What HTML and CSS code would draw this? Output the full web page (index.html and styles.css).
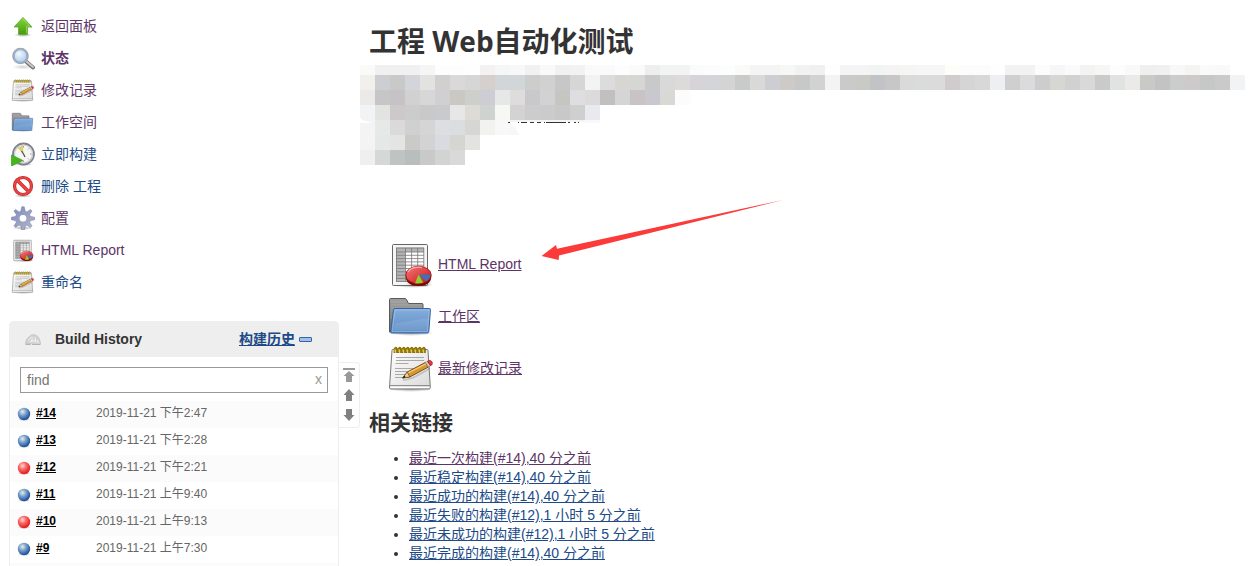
FILE: index.html
```html
<!DOCTYPE html>
<html lang="zh-CN">
<head>
    <meta charset="utf-8">
    <title>Web自动化测试 [Jenkins]</title>
    <link rel="stylesheet" href="styles.css">
</head>
<body>
    <!-- icons used more than once -->
    <svg class="defs" width="0" height="0" aria-hidden="true">
        <defs>
            <linearGradient id="paper" x1="0" y1="0" x2="1" y2="1">
                <stop offset="0" stop-color="#ffffff"/>
                <stop offset="1" stop-color="#d9d9d9"/>
            </linearGradient>
            <linearGradient id="folderBack" x1="0" y1="0" x2="0" y2="1">
                <stop offset="0" stop-color="#a0a0a0"/>
                <stop offset="1" stop-color="#6c6c6c"/>
            </linearGradient>
            <linearGradient id="folderFront" x1="0" y1="0" x2="0" y2="1">
                <stop offset="0" stop-color="#87aedb"/>
                <stop offset="1" stop-color="#5b8cc6"/>
            </linearGradient>
            <linearGradient id="green" x1="0" y1="0" x2="0" y2="1">
                <stop offset="0" stop-color="#86d63a"/>
                <stop offset="1" stop-color="#459a0c"/>
            </linearGradient>
            <linearGradient id="redPie" x1="0" y1="0" x2="1" y2="1">
                <stop offset="0" stop-color="#f47a7a"/>
                <stop offset="1" stop-color="#cc1010"/>
            </linearGradient>
            <linearGradient id="steel" x1="0" y1="0" x2="1" y2="1">
                <stop offset="0" stop-color="#8088bc"/>
                <stop offset="1" stop-color="#b3bacb"/>
            </linearGradient>
            <radialGradient id="glass" cx="0.4" cy="0.35" r="0.7">
                <stop offset="0" stop-color="#f3f9ff"/>
                <stop offset="1" stop-color="#a3c5ea"/>
            </radialGradient>
            <radialGradient id="blueBall" cx="0.38" cy="0.32" r="0.65">
                <stop offset="0" stop-color="#e6efe6"/>
                <stop offset="0.45" stop-color="#7ba2cd"/>
                <stop offset="1" stop-color="#1f529d"/>
            </radialGradient>
            <radialGradient id="redBall" cx="0.38" cy="0.32" r="0.65">
                <stop offset="0" stop-color="#ffd9d9"/>
                <stop offset="0.45" stop-color="#fa6a6a"/>
                <stop offset="1" stop-color="#e81c1c"/>
            </radialGradient>
            <radialGradient id="shade">
                <stop offset="0" stop-color="#000" stop-opacity="0.35"/>
                <stop offset="1" stop-color="#000" stop-opacity="0"/>
            </radialGradient>
        </defs>

        <symbol id="icon-report" viewBox="0 0 48 48">
            <ellipse cx="26" cy="45" rx="20" ry="3" fill="url(#shade)"/>
            <rect x="5.5" y="4.5" width="35" height="41" rx="1" fill="#f6f6f6" stroke="#666"/>
            <rect x="9" y="7.500" width="28" height="34" fill="#fff"/>
            <path d="M9 7.500h28v4.500H18.500v29.500H9z" fill="#b5b5b5"/>
            <path d="M9 8h28M9 12h28M9 15.300h28M9 18.600h28M9 21.900h28M9 25.200h28M9 28.500h28M9 31.800h28M9 35.100h28M9 38.400h28M9 41.500h28M9.500 8v33.500M18.500 8v33.500M24.600 8v33.500M30.700 8v33.500M36.800 8v33.500" fill="none" stroke="#777" stroke-width="0.8"/>
            <ellipse cx="32" cy="43" rx="14" ry="4.500" fill="url(#shade)"/>
            <path d="M18.800 35v2.500c0 5 5.700 8.500 12.700 8.500s12.700-3.500 12.700-8.500V35z" fill="#7d0505"/>
            <ellipse cx="31.500" cy="35" rx="12.700" ry="8.800" fill="url(#redPie)" stroke="#a80a0a" stroke-width="0.8"/>
            <path d="M31.500 34.500h12c0 3-1.500 5-4.700 6.800z" fill="#3f71b5"/>
            <path d="M31.500 34.500l4.700 8c-3 1.200-5.800 1.200-8.200.8z" fill="#8ed12c"/>
            <path d="M21 32c2-4 8-5.500 14-4.500" fill="none" stroke="#ffb0b0" stroke-width="1.200"/>
        </symbol>

        <symbol id="icon-folder" viewBox="0 0 48 48">
            <ellipse cx="24" cy="41" rx="23" ry="3" fill="url(#shade)"/>
            <path d="M2.500 40V7.500q0-1 1-1H18q1 0 1.500 1l2 4H35q1 0 1 1V40z" fill="url(#folderBack)" stroke="#5a5a5a"/>
            <path d="M4 10h15M4 13h31M4 16h31M4 19h10M4 22h10M4 25h10" stroke="#b7b7b7" stroke-width="0.6"/>
            <path d="M8 16.500h34.500q1 0 1 1l-1.700 22q-.2 1.500-1.500 1.500H4.500q-1 0-.8-1.500l2.800-22q.2-1 1.500-1z" fill="url(#folderFront)" stroke="#3465a4"/>
            <path d="M8 18h34.200l-1.700 21.500H5.200z" fill="none" stroke="#b4cdea" stroke-width="0.5"/>
            <path d="M8 31c12-1 21-4 33.500-4.500l-1 12H6.500z" fill="#fff" opacity="0.1"/>
        </symbol>

        <symbol id="icon-notepad" viewBox="0 0 48 48">
            <ellipse cx="24" cy="45" rx="23" ry="3" fill="url(#shade)"/>
            <path d="M6 5.500h34q1 0 1 1l2.300 36.500q0 2-1.500 2H3.800q-1.500 0-1.300-2L5 6.500q0-1 1-1z" fill="url(#paper)" stroke="#777"/>
            <path d="M3 41.500h40" stroke="#8f8f8f"/>
            <path d="M3.500 43.500h39" stroke="#fff"/>
            <path d="M9 13.500h28M9 16.500h28M8.500 19.500h13M8 24.500h27M8 27.500h22M8 30.500h12M8 33.500h9" stroke="#a9a9a9"/>
            <g fill="none" stroke="#8f7404" stroke-width="1.800">
                <path d="M7.500 9V5q1.500-2.500 2.500 0v4M11.500 9V5q1.500-2.500 2.500 0v4M15.500 9V5q1.500-2.500 2.500 0v4M19.500 9V5q1.500-2.500 2.500 0v4M23.500 9V5q1.500-2.500 2.500 0v4M27.500 9V5q1.500-2.500 2.500 0v4M31.500 9V5q1.500-2.500 2.500 0v4M35.500 9V5q1.500-2.500 2.500 0v4"/>
                <path d="M8 8V5M12 8V5M16 8V5M20 8V5M24 8V5M28 8V5M32 8V5M36 8V5" stroke="#ecd335" stroke-width="0.9"/>
            </g>
            <path d="M16 36c8 0 18-6 27-12" stroke="#000" stroke-opacity="0.15" stroke-width="2" fill="none"/>
            <path d="M15.500 34l4.800-6 18-9.500 3 4.500-18.500 10z" fill="#d9982f" stroke="#6b4606" stroke-width="0.9"/>
            <path d="M21 29l18-9.300" stroke="#f5cf83" stroke-width="1.200"/>
            <path d="M15.500 34l4.800-6 2.500 5z" fill="#e9cfa0" stroke="#6b4606" stroke-width="0.7"/>
            <path d="M15.500 34l2-2.500 1.200 2z" fill="#222"/>
            <path d="M38.300 18.500l2.200-1.200 3 4.500-2.200 1.200z" fill="#c9ccd2" stroke="#777" stroke-width="0.5"/>
            <path d="M40.500 17.300l1.500-.7c2.500-.8 4.300 2.400 2.800 4.300l-1.300.9z" fill="#e8383c" stroke="#a01318" stroke-width="0.7"/>
        </symbol>

        <symbol id="ball-blue" viewBox="0 0 14 14">
            <ellipse cx="7" cy="12.500" rx="6.500" ry="1.500" fill="url(#shade)"/>
            <circle cx="7" cy="7" r="6.200" fill="url(#blueBall)"/>
        </symbol>
        <symbol id="ball-red" viewBox="0 0 14 14">
            <ellipse cx="7" cy="12.500" rx="6.500" ry="1.500" fill="url(#shade)"/>
            <circle cx="7" cy="7" r="6.200" fill="url(#redBall)"/>
        </symbol>
    </svg>

    <div class="page">
        <div class="side-panel">
            <nav class="tasks">
                <a class="task visited" href="#">
                    <svg class="icon24" viewBox="0 0 24 24"><ellipse cx="12" cy="21" rx="9" ry="2" fill="url(#shade)"/><path d="M12 3.500l9 9.500h-4.500v7.500h-9V13H3z" fill="url(#green)" stroke="#5fa832" stroke-width="0.8"/><path d="M12 5l6.500 7h-3v7.500" fill="none" stroke="#b5ea80" stroke-width="0.8" opacity="0.7"/></svg>
                    返回面板
                </a>
                <a class="task visited current" href="#">
                    <svg class="icon24" viewBox="0 0 24 24"><ellipse cx="12" cy="21" rx="11" ry="2.500" fill="url(#shade)" opacity="0.5"/><path d="M15 15.500l7 6" stroke="#777" stroke-width="4" stroke-linecap="round"/><path d="M15.500 15.500l6.500 5.500" stroke="#c9c9c9" stroke-width="1.800" stroke-linecap="round"/><circle cx="9.500" cy="10" r="7.500" fill="url(#glass)" stroke="#a2a6ab" stroke-width="1.600"/><circle cx="9.500" cy="10" r="6.200" fill="none" stroke="#7fa5d6" stroke-width="0.8"/></svg>
                    状态
                </a>
                <a class="task visited" href="#">
                    <svg class="icon24"><use href="#icon-notepad"/></svg>
                    修改记录
                </a>
                <a class="task visited" href="#">
                    <svg class="icon24"><use href="#icon-folder"/></svg>
                    工作空间
                </a>
                <a class="task" href="#">
                    <svg class="icon24" viewBox="0 0 24 24"><ellipse cx="12.500" cy="22.500" rx="10" ry="1.500" fill="url(#shade)"/><circle cx="12.500" cy="12" r="10.500" fill="#f6f6f2" stroke="#80818f" stroke-width="1.800"/><circle cx="12.500" cy="12" r="9" fill="none" stroke="#c9cad0" stroke-width="1.200"/><path d="M12.500 12L6.500 6 12 3.500z" fill="#ddd06a"/><path d="M12.500 12L10.500 9M12.500 12l1.500 3" stroke="#555" stroke-width="1.300"/><path d="M12.500 4v1.500M20.500 12H19M12.500 20v-1.500M18 6.500l-1 1M18 17.500l-1-1" stroke="#999"/><path d="M.5 13l11.500 5.500L.5 24z" fill="#44b51b" stroke="#3b9d1c" stroke-width="0.7"/></svg>
                    立即构建
                </a>
                <a class="task" href="#">
                    <svg class="icon24" viewBox="0 0 24 24"><ellipse cx="12" cy="22" rx="9" ry="1.500" fill="url(#shade)"/><circle cx="12" cy="12" r="8.500" fill="#fff" stroke="#c02020" stroke-width="3.200"/><path d="M6.500 6.500l11 11" stroke="#c82424" stroke-width="3.400"/><circle cx="12" cy="12" r="8.500" fill="none" stroke="#e64545" stroke-width="2"/><path d="M6.200 6.200l11.600 11.600" stroke="#e64545" stroke-width="2.400"/></svg>
                    删除 工程
                </a>
                <a class="task visited" href="#">
                    <svg class="icon24" viewBox="0 0 24 24"><ellipse cx="12" cy="22" rx="10" ry="2" fill="url(#shade)"/><path fill-rule="evenodd" d="M10.800.8h2.400l1 4.400 1.800.8 3.400-2.500 1.600 1.600-2.400 3.500.8 1.900 4.100.7v2.600l-4.100.8-.8 1.900 2.400 3.300-1.600 1.700-3.400-2.400-1.800.8-1 4.100h-2.400l-1-4.100-1.800-.8-3.400 2.400L3 19.800l2.400-3.300-.8-1.900-4.100-.8v-2.600l4.100-.7.8-1.900L3 5.100l1.600-1.600L8 6l1.800-.8zM12 8.700a3.500 3.500 0 1 0 0 7 3.500 3.500 0 0 0 0-7z" fill="url(#steel)" stroke="#7c83a8" stroke-width="0.6"/><circle cx="12" cy="12.200" r="3.300" fill="#fff"/></svg>
                    配置
                </a>
                <a class="task visited" href="#">
                    <svg class="icon24"><use href="#icon-report"/></svg>
                    HTML Report
                </a>
                <a class="task" href="#">
                    <svg class="icon24"><use href="#icon-notepad"/></svg>
                    重命名
                </a>
            </nav>

            <div class="history-wrap">
                <section class="history">
                    <header class="history-head">
                        <svg class="cap" viewBox="0 0 16 14"><path d="M.5 10.500C1 7 2 5 4.500 3.500 5.500 1.800 8.500 1 11 2.300c2.500 1.300 4 4.200 4.500 8.200l-1 1H7l-1-1z" fill="#d2d2d2" stroke="#bcbcbc" stroke-width="0.7"/><path d="M3.500 7.500c1-2 2.500-3 4-3.500M8 5.500l-3 4M10 4.500l1 5M6 8h4M12.500 7l1 3" stroke="#f5f5f5" stroke-width="1" fill="none"/><path d="M.5 11.500h5M7.500 11.500h8" stroke="#b3b3b3"/></svg>
                        <span class="history-title">Build History</span>
                        <a class="trend" href="#">构建历史</a>
                        <button class="collapse" type="button" aria-label="collapse"></button>
                    </header>
                    <div class="search">
                        <input class="search-input" type="text" placeholder="find" aria-label="find">
                        <button class="search-clear" type="button">x</button>
                    </div>
                    <table class="builds">
                        <tr>
                            <td class="ball"><svg><use href="#ball-blue"/></svg></td>
                            <td class="num"><a href="#">#14</a></td>
                            <td class="date">2019-11-21 下午2:47</td>
                        </tr>
                        <tr>
                            <td class="ball"><svg><use href="#ball-blue"/></svg></td>
                            <td class="num"><a href="#">#13</a></td>
                            <td class="date">2019-11-21 下午2:28</td>
                        </tr>
                        <tr>
                            <td class="ball"><svg><use href="#ball-red"/></svg></td>
                            <td class="num"><a href="#">#12</a></td>
                            <td class="date">2019-11-21 下午2:21</td>
                        </tr>
                        <tr>
                            <td class="ball"><svg><use href="#ball-blue"/></svg></td>
                            <td class="num"><a href="#">#11</a></td>
                            <td class="date">2019-11-21 上午9:40</td>
                        </tr>
                        <tr>
                            <td class="ball"><svg><use href="#ball-red"/></svg></td>
                            <td class="num"><a href="#">#10</a></td>
                            <td class="date">2019-11-21 上午9:13</td>
                        </tr>
                        <tr>
                            <td class="ball"><svg><use href="#ball-blue"/></svg></td>
                            <td class="num"><a href="#">#9</a></td>
                            <td class="date">2019-11-21 上午7:30</td>
                        </tr>
                    </table>
                </section>
                <div class="pager">
                    <button type="button" aria-label="newest"><svg viewBox="0 0 12 16"><path d="M0 1h12v2H0zM6 4l5.500 5H9v6H3V9H.5z" fill="#999"/></svg></button>
                    <button type="button" aria-label="newer"><svg viewBox="0 0 12 16"><path d="M6 2l5.500 6H9v6H3V8H.5z" fill="#808080"/></svg></button>
                    <button type="button" aria-label="older"><svg viewBox="0 0 12 16"><path d="M6 14l5.500-6H9V2H3v6H.5z" fill="#808080"/></svg></button>
                </div>
            </div>
        </div>

        <main class="main-panel">
            <h1>工程 Web自动化测试</h1>
            <svg class="description" id="description" viewBox="0 0 885 100" shape-rendering="crispEdges" aria-hidden="true"></svg>

            <div class="links">
                <a class="link-row" href="#">
                    <svg class="icon48"><use href="#icon-report"/></svg>
                    <span>HTML Report</span>
                </a>
                <a class="link-row" href="#">
                    <svg class="icon48"><use href="#icon-folder"/></svg>
                    <span>工作区</span>
                </a>
                <a class="link-row" href="#">
                    <svg class="icon48"><use href="#icon-notepad"/></svg>
                    <span>最新修改记录</span>
                </a>
                <svg class="pointer" viewBox="0 0 244 64" aria-hidden="true"><path d="M1.500 58L16 47l1 3.700L243 2 19 57.500l-.3 4.500z" fill="#fc3a3a"/></svg>
            </div>

            <h2>相关链接</h2>
            <ul class="permalinks">
                <li><a class="visited" href="#">最近一次构建(#14),40 分之前</a></li>
                <li><a href="#">最近稳定构建(#14),40 分之前</a></li>
                <li><a href="#">最近成功的构建(#14),40 分之前</a></li>
                <li><a href="#">最近失败的构建(#12),1 小时 5 分之前</a></li>
                <li><a href="#">最近未成功的构建(#12),1 小时 5 分之前</a></li>
                <li><a href="#">最近完成的构建(#14),40 分之前</a></li>
            </ul>
        </main>
    </div>
    <script src="script.js"></script>
</body>
</html>
```
FILE: styles.css
```css
* {
    box-sizing: border-box;
}

body {
    margin: 0;
    background-color: #fff;
    color: #333;
    font-family: "Liberation Sans", "Noto Sans CJK SC", sans-serif;
    font-size: 14px;
    line-height: 19px;
}

a {
    color: #204a87;
}

button {
    border: 0;
    padding: 0;
    background: none;
    font: inherit;
}

svg {
    display: block;
}

.visited {
    color: #5c3566;
}

.defs {
    position: absolute;
}

.page {
    display: flex;
    min-height: 100vh;
}

/* left column */
.side-panel {
    flex: 0 0 360px;
    display: flex;
    flex-direction: column;
    padding-left: 9px;
}

.tasks {
    padding: 10px 0 0 2px;
}

.task {
    display: flex;
    align-items: center;
    gap: 6px;
    height: 32px;
    text-decoration: none;
}

.current {
    font-weight: bold;
}

.icon24 {
    width: 24px;
    height: 24px;
}

.history-wrap {
    display: flex;
    flex: 1;
    align-items: flex-start;
    margin-top: 23px;
}

.history {
    flex: 1;
    align-self: stretch;
    border: 1px solid #eee;
    border-bottom: 0;
    border-radius: 5px 5px 0 0;
    background-color: #fbfbfb;
}

.history-head {
    display: flex;
    align-items: center;
    height: 35px;
    padding: 0 26px 0 15px;
    background-color: #eee;
    font-weight: bold;
}

.cap {
    width: 16px;
    height: 14px;
}

.history-title {
    margin-left: 14px;
}

.trend {
    margin-left: auto;
}

.collapse {
    width: 13px;
    height: 5px;
    margin-left: 4px;
    border: 1px solid #3465a4;
    border-radius: 1px;
    background-color: #a5c0e4;
}

.search {
    position: relative;
    padding: 10px 10px 8px;
    background-color: #fff;
}

.search-input {
    display: block;
    width: 100%;
    height: 26px;
    padding: 0 6px;
    border: 1px solid #999;
    font: inherit;
}

.search-input::placeholder {
    color: #757575;
}

.search-clear {
    position: absolute;
    top: 13px;
    right: 16px;
    color: #999;
}

.builds {
    width: 100%;
    border-collapse: collapse;
    font-size: 12px;
}

.builds td {
    height: 27px;
    padding: 0 0 2px;
}

.builds tr {
    background-color: #fff;
}

.builds tr:nth-child(odd) {
    background-color: #fbfbfb;
}

.builds .ball {
    width: 26px;
    padding: 0 0 1px 7px;
}

.ball svg {
    width: 14px;
    height: 14px;
}

.num {
    width: 60px;
    font-weight: bold;
}

.num a {
    color: #000;
}

.date {
    color: #666;
}

.pager {
    display: flex;
    flex-direction: column;
    gap: 4px;
    margin-top: 41px;
    padding: 4px 4px;
    border: 1px solid #eee;
    border-left: 0;
    border-radius: 0 4px 4px 0;
}

.pager svg {
    width: 12px;
    height: 16px;
}

/* right column */
.main-panel {
    flex: 1;
    min-width: 0;
}

h1,
h2 {
    margin: 0 0 0 9px;
    font-family: "Open Sans", "Noto Sans CJK SC", sans-serif;
}

h1 {
    padding-top: 22px;
    font-size: 28px;
    line-height: 38px;
}

.description {
    width: 100%;
    max-width: 885px;
    margin-top: 5px;
}

.links {
    position: relative;
    display: flex;
    flex-direction: column;
    align-items: flex-start;
    gap: 4px;
    margin-top: 75px;
    padding-left: 27px;
}

.link-row {
    display: flex;
    align-items: center;
    gap: 3px;
    color: #5c3566;
}

.icon48 {
    width: 48px;
    height: 48px;
}

/* red arrow that points at the report link */
.pointer {
    position: absolute;
    top: -42px;
    left: 180px;
    width: 244px;
    height: 64px;
}

h2 {
    margin-top: 16px;
    font-size: 21px;
    line-height: 28px;
}

.permalinks {
    margin: 13px 0 0;
    padding-left: 49px;
}
```
FILE: script.js
```js
// grey blocks over the project description, 15px each, the first row is 10px high
var rows = [
    "fafaf8 f0f0f0 f0f0f0 f0f0f1 f5f5f5 fdfdfd fdfdfd fefefe f3f1f1 f5f6f6 f8f8f8 f1f1f1 f9f9f9 f1f1f1 f2f2f2 fafafa fafafa fcfefd fafafa eeeeee f2f4f3 f2f4f3 fbfbfb fcfcfc fcfefe fafaf8 f4f4f4 f4f4f4 f7f7f7 f2f2f2 f0f0f0 fefefe f4f4f4 f3f4f3 f2f4f3 f4f4f4 f5f5f3 f6f6f6 f6f6f6 fdfdf9 fcfcfc fcfcfc fefefe f2f2f2 f2f2f2 fcfcfc f6f6f6 fafafa f3f3f1 f6f6f6 fdfdfd f9f9f9 efefef f0f0f0 f8f8f8 f4f4f2 fafafa f9f9f9",
    "f2f0ec cdced1 c9c9c9 d4d5da e2e3e1 d2cfd1 d9d9da d6d6d6 d5cfce d2d6d8 d1d7d9 cdcecc d1d1d1 c7c7c7 d6d6d6 f2f4f3 dcdcdd d8d6d3 d6d6d4 c9c9c9 d9d9d9 dddbd9 d7d4d9 d3d5d8 d4d4d4 c8cbca d9dad7 cdced1 cdcac8 c6c9c7 d2d2d2 f4f3f1 cacaca c9c9c6 c1c3c6 c7c7c7 dadada dadcdb dbdbdb d0cccd d5d5d5 d8d8d8 eeeff2 cfcfcf dbdbde cdcdcd d8d6d3 d1d1d1 dbd8d9 cacac8 e0e3e1 ebeae8 c9c9c6 c3c3c3 cacdcc cecacb c5c8c6 cacacb f2f3f5",
    "ebeae9 c6c6c6 c5c3c6 d1d1d1 d7d7d7 d0d0d2 cac8c3 cdcfcd cecdd4 e6e8e7 dedddb c9c9cc d2d2d2 c5c5c2 dedee0 dddadb c2bfc0 d5d5d8 c9c3c5 c9c8ce d8d9d4 fcfcfc",
    "f2f3f4 e3e3e1 cdc9ca cccccc c9c9c9 cacacd e7e7e8 dddbd6 d0d2d0 f7f7f4 d3d3d3 cccccd cbcbcb c8c8c8 cfcfcf e9eaed",
    "f4f4f4 e7e9e8 dadadb d0d0d0 d5d5d5 dddee1 dcdde0 d6d6d3 f2f2f0 f8f8f8",
    "f4f4f4 e6e7e7 e4e5e3 cbcac8 d3d3d4 d9dbe0 d5d5d2 e3e3e2",
    "efefed d6d7d7 bfc3c1 b8bdbe c9c9c9 d2d4d2 d9d9d9"
];

var description = document.getElementById("description");

function addShape(name, attrs) {
    var el = document.createElementNS("http://www.w3.org/2000/svg", name);
    for (var key in attrs) {
        el.setAttribute(key, attrs[key]);
    }
    description.appendChild(el);
}

function addBlock(x, y, width, height, color) {
    addShape("rect", { x: x, y: y, width: width, height: height, fill: color });
}

for (var i = 0; i < rows.length; i++) {
    var colors = rows[i].split(" ");
    for (var j = 0; j < colors.length; j++) {
        addBlock(j * 15, i == 0 ? 0 : i * 15 - 5, 15, i == 0 ? 10 : 15, "#" + colors[j]);
    }
}

// bottom edge of the fourth row
addBlock(150, 55, 75, 2, "#f4f4f4");
addBlock(225, 55, 15, 3, "#f9f9f9");
addShape("path", { d: "M150 58q6 4 9 12h-9z", fill: "#f7f7f7" });
addShape("path", { d: "M0 53q4 4 15 5H0z", fill: "#ffffff" });

// what is left of the covered text line
var dots = [[148, 2], [158, 1], [161, 6], [170, 4], [177, 4], [184, 1], [186, 20], [208, 2], [214, 2], [218, 1]];
for (var k = 0; k < dots.length; k++) {
    addBlock(dots[k][0], 57, dots[k][1], 1, "#333333");
}
```
